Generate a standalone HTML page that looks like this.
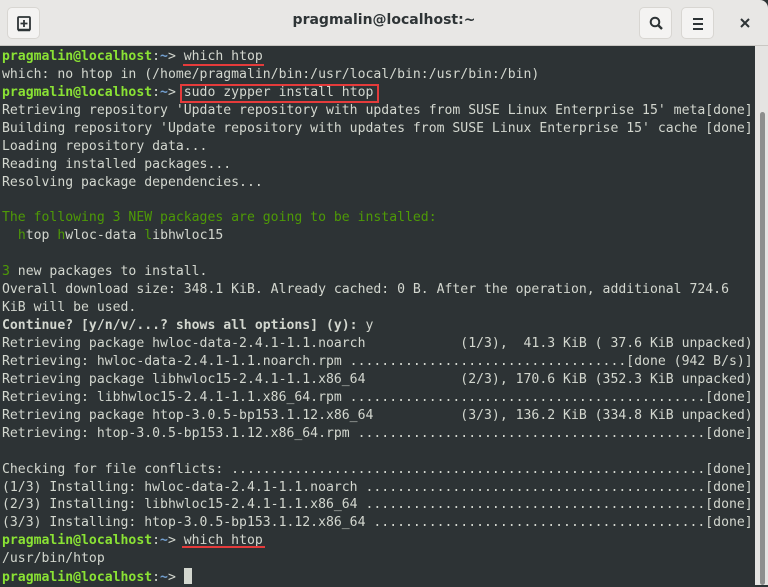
<!DOCTYPE html>
<html><head><meta charset="utf-8"><style>
*{margin:0;padding:0;box-sizing:border-box}
body{width:768px;height:585px;overflow:hidden;background:#2d3335;position:relative;font-family:"DejaVu Sans Mono","Liberation Mono",monospace}
.hdr{position:absolute;left:0;top:0;width:768px;height:46px;background:#e8e7e5;border-bottom:1px solid #c9c7c3;border-top-right-radius:8px}
.btn{position:absolute;top:7px;width:33px;height:32px;background:#f4f3f2;border:1px solid #d8d6d2;border-radius:5px}
.title{position:absolute;left:0;width:768px;top:12px;text-align:center;font:bold 14px "DejaVu Sans","Liberation Sans",sans-serif;color:#2e3436}
.term{position:absolute;left:2px;top:48px;font-size:13.13px;line-height:17.93px;color:#d3d7cf;white-space:pre}
.p{color:#8ae234;font-weight:bold}.b{color:#729fcf;font-weight:bold}.g{color:#4e9a06}.w{font-weight:bold}
.sb{position:absolute;left:755px;top:46px;width:13px;height:539px;background:#e5e4e2}
.th{position:absolute;left:760px;top:112px;width:5px;height:473px;background:#8d8e8d;border-radius:3px}
.r{position:absolute;background:#e53b3b}
.box{position:absolute;border:2px solid #e53b3b}
.cur{display:inline-block;width:8px;height:16px;background:#d3d7cf;vertical-align:-3px}
</style></head><body>
<div class="hdr">
<div class="btn" style="left:7px"><svg width="33" height="32" viewBox="0 0 33 32"><rect x="10" y="9" width="12" height="13" rx="1" fill="none" stroke="#2e3436" stroke-width="1.8"/><path d="M16 12v7M12.5 15.5h7" stroke="#2e3436" stroke-width="1.8"/><path d="M10 22h12" stroke="#2e3436" stroke-width="2.5"/></svg></div>
<div class="title">pragmalin@localhost:~</div>
<div class="btn" style="left:639px"><svg width="33" height="32" viewBox="0 0 33 32"><circle cx="15" cy="14" r="4.3" fill="none" stroke="#2e3436" stroke-width="2"/><path d="M18 17l4 4" stroke="#2e3436" stroke-width="2.4"/></svg></div>
<div class="btn" style="left:681px"><svg width="33" height="32" viewBox="0 0 33 32"><path d="M11 11h10M11 16h10M11 21h10" stroke="#2e3436" stroke-width="2"/></svg></div>
<svg style="position:absolute;left:738px;top:16px" width="14" height="14" viewBox="0 0 14 14"><path d="M3 3l8 8M11 3l-8 8" stroke="#2e3436" stroke-width="2"/></svg>
</div>
<div class="sb"></div><div class="th"></div>
<div class="term"><span class="p">pragmalin@localhost</span>:<span class="b">~</span>&gt; which htop
which: no htop in (/home/pragmalin/bin:/usr/local/bin:/usr/bin:/bin)
<span class="p">pragmalin@localhost</span>:<span class="b">~</span>&gt; sudo zypper install htop
Retrieving repository 'Update repository with updates from SUSE Linux Enterprise 15' meta[done]
Building repository 'Update repository with updates from SUSE Linux Enterprise 15' cache [done]
Loading repository data...
Reading installed packages...
Resolving package dependencies...

<span class="g">The following 3 NEW packages are going to be installed:</span>
  <span class="g">h</span>top <span class="g">h</span>wloc-data <span class="g">l</span>ibhwloc15

<span class="g">3</span> new packages to install.
Overall download size: 348.1 KiB. Already cached: 0 B. After the operation, additional 724.6
KiB will be used.
<span class="w">Continue? [y/n/v/...? shows all options] (y):</span> y
Retrieving package hwloc-data-2.4.1-1.1.noarch            (1/3),  41.3 KiB ( 37.6 KiB unpacked)
Retrieving: hwloc-data-2.4.1-1.1.noarch.rpm ...................................[done (942 B/s)]
Retrieving package libhwloc15-2.4.1-1.1.x86_64            (2/3), 170.6 KiB (352.3 KiB unpacked)
Retrieving: libhwloc15-2.4.1-1.1.x86_64.rpm .............................................[done]
Retrieving package htop-3.0.5-bp153.1.12.x86_64           (3/3), 136.2 KiB (334.8 KiB unpacked)
Retrieving: htop-3.0.5-bp153.1.12.x86_64.rpm ............................................[done]

Checking for file conflicts: ............................................................[done]
(1/3) Installing: hwloc-data-2.4.1-1.1.noarch ...........................................[done]
(2/3) Installing: libhwloc15-2.4.1-1.1.x86_64 ...........................................[done]
(3/3) Installing: htop-3.0.5-bp153.1.12.x86_64 ..........................................[done]
<span class="p">pragmalin@localhost</span>:<span class="b">~</span>&gt; which htop
/usr/bin/htop
<span class="p">pragmalin@localhost</span>:<span class="b">~</span>&gt; <span class="cur"></span></div>
<div class="r" style="left:183px;top:64px;width:81px;height:2px"></div>
<div class="box" style="left:180px;top:84px;width:199px;height:19px"></div>
<div class="r" style="left:182px;top:546px;width:83px;height:2px"></div>
</body></html>
